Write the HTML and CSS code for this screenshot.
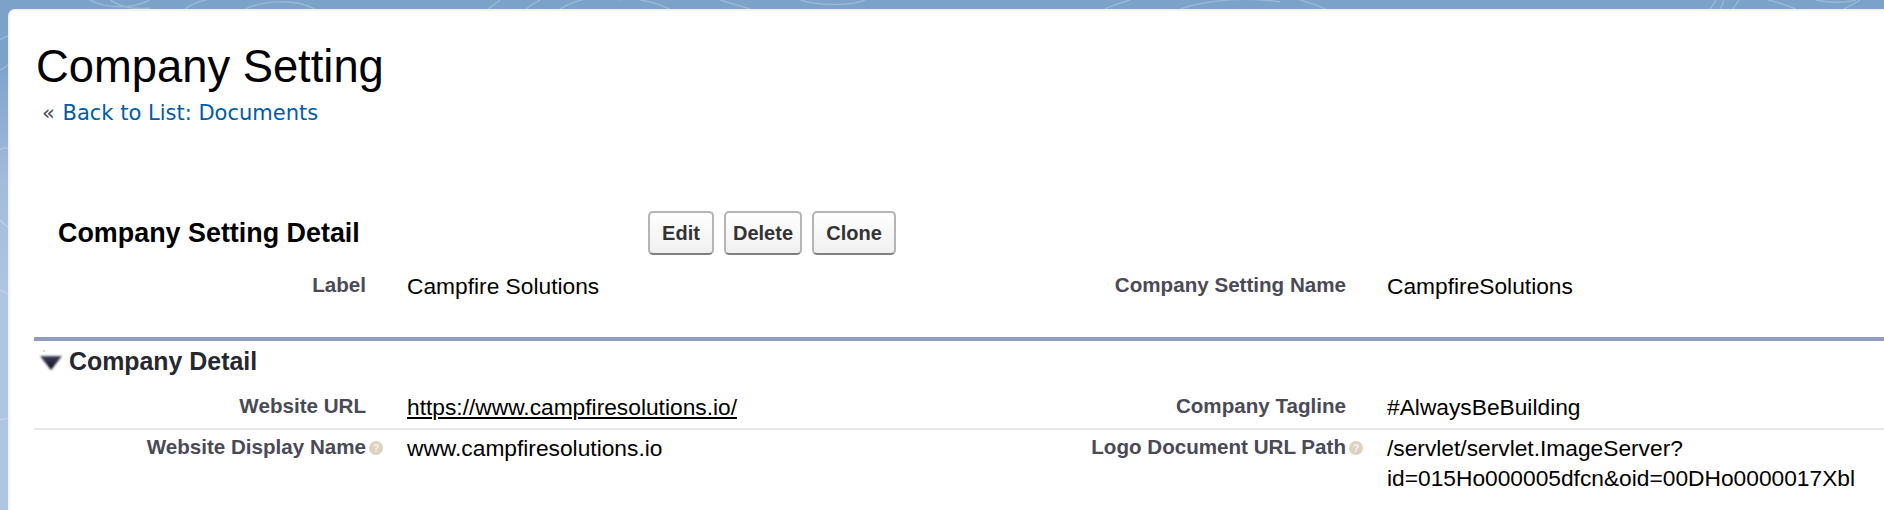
FILE: index.html
```html
<!DOCTYPE html>
<html lang="en">
<head>
    <meta charset="UTF-8">
    <title>Company Setting</title>
    <link rel="stylesheet" href="styles.css">
</head>
<body>
    <!-- swirl pattern behind the page -->
    <svg class="backdrop" width="1884" height="510" viewBox="0 0 1884 510" fill="none" stroke="#ffffff" stroke-opacity="0.22" stroke-width="1.5">
        <path d="M90 0c15 8 40 10 60 0M150 8c-20 2-30 -2-40 -8"/>
        <path d="M185 9c8-6 14-8 22-9M245 9c20-9 50-10 70 0"/>
        <path d="M500 0c-4 4-8 6-12 9M540 0c-6 3-10 6-14 9M560 9c20-12 40-14 60-9"/>
        <path d="M640 0c15 2 20 5 30 9M720 0c10 3 20 6 30 9M800 0c20 6 50 6 65 0"/>
        <path d="M1130 0c-10 3-20 6-25 9M1180 9c30-10 70-12 100-7M1300 0c10 3 20 6 25 9"/>
        <path d="M1710 9c3-3 4-6 6-9M1720 9c2-3 3-6 4-9M1733 9c2-3 4-6 6-9"/>
        <path d="M1768 0c10 2 20 6 28 9M1816 0c12 3 30 3 40 0M1844 9c6-3 12-6 16-9"/>
        <path d="M0 40c4-3 7-4 10-4M0 70c5-2 8-4 10-8M10 150c-4-3-8-3-10 0M0 220c3 4 7 6 10 8M0 290c4 1 7 3 10 6M0 420c4-2 7-2 10 0"/>
    </svg>

    <div class="page">
        <h1 class="page-title">Company Setting</h1>
        <div class="back-row">
            <span class="back-arrows">&laquo;</span>
            <a class="back-link" href="#">Back to List: Documents</a>
        </div>

        <div class="detail-block">
            <div class="block-header">
                <h2 class="block-title">Company Setting Detail</h2>
                <div class="block-buttons">
                    <button class="btn btn-edit" type="button">Edit</button>
                    <button class="btn btn-delete" type="button">Delete</button>
                    <button class="btn btn-clone" type="button">Clone</button>
                </div>
            </div>

            <div class="field-row field-row-first">
                <div class="field-label">Label</div>
                <div class="field-value">Campfire Solutions</div>
                <div class="field-label">Company Setting Name</div>
                <div class="field-value">CampfireSolutions</div>
            </div>

            <div class="section-header">
                <svg class="twisty" width="26" height="24" viewBox="0 0 26 24">
                    <defs>
                        <linearGradient id="twistyFill" x1="0" y1="0" x2="0" y2="1">
                            <stop offset="0" stop-color="#3c4058"/>
                            <stop offset="1" stop-color="#0c0c1c"/>
                        </linearGradient>
                        <filter id="twistyBlur"><feGaussianBlur stdDeviation="0.9"/></filter>
                    </defs>
                    <circle cx="5" cy="2" r="1" fill="#c9cbd6"/>
                    <polygon points="1,7 23,7 12,21" fill="url(#twistyFill)" filter="url(#twistyBlur)"/>
                </svg>
                <h3 class="section-title">Company Detail</h3>
            </div>

            <div class="field-row field-row-line">
                <div class="field-label">Website URL</div>
                <div class="field-value"><a class="value-link" href="#">https://www.campfiresolutions.io/</a></div>
                <div class="field-label">Company Tagline</div>
                <div class="field-value">#AlwaysBeBuilding</div>
            </div>
            <div class="field-row field-row-last">
                <div class="field-label">Website Display Name<span class="help-icon">?</span></div>
                <div class="field-value">www.campfiresolutions.io</div>
                <div class="field-label">Logo Document URL Path<span class="help-icon">?</span></div>
                <div class="field-value">/servlet/servlet.ImageServer?<br>id=015Ho000005dfcn&amp;oid=00DHo0000017Xbl</div>
            </div>
        </div>
    </div>
</body>
</html>
```

FILE: styles.css
```css
html, body {
    margin: 0;
    height: 510px;
    overflow: hidden;
}

body {
    position: relative;
    font-family: "Liberation Sans", Arial, sans-serif;
    background: linear-gradient(to bottom, #7ca2c9 0, #7ca2c9 60px, #a3bbdc 180px, #afc5e2 300px, #afc5e2 100%);
}

.backdrop {
    position: absolute;
    top: 0;
    left: 0;
}

.page {
    position: relative;
    margin: 9px 0 0 8px;
    height: 501px;
    box-sizing: border-box;
    padding: 0 0 0 24px;
    background: #fff;
    border-top: 2px solid #f2f3f4;
    border-left: 2px solid #f2f3f4;
    border-top-left-radius: 7px;
}

.page-title {
    margin: 0;
    padding: 30px 0 0 2px;
    font-size: 45.35px;
    line-height: 52px;
    font-weight: 400;
    color: #000;
}

.back-row {
    margin: 7px 0 0 8px;
    font-family: "DejaVu Sans", Verdana, sans-serif;
    font-size: 21px;
    line-height: 26px;
    color: #4a4a56;
}

.back-arrows {
    margin-right: 1px;
}

.back-link {
    color: #015ba7;
    text-decoration: none;
}

.detail-block {
    margin-top: 85px;
}

.block-header {
    display: flex;
    align-items: center;
    height: 44px;
}

.block-title {
    width: 590px;
    margin: 0 24px 0 0;
    padding-left: 24px;
    box-sizing: border-box;
    font-size: 26.9px;
    font-weight: 700;
    color: #000;
    flex: none;
}

.block-buttons {
    display: flex;
    gap: 10px;
}

.btn {
    height: 44px;
    padding: 0;
    font-family: "Liberation Sans", Arial, sans-serif;
    font-size: 20px;
    font-weight: 700;
    color: #333;
    background: linear-gradient(to bottom, #ffffff, #f0f0f0);
    border: 2px solid #b5b5b5;
    border-bottom-color: #7f7f7f;
    border-radius: 5px;
}

.btn-edit {
    width: 66px;
}

.btn-delete {
    width: 78px;
}

.btn-clone {
    width: 84px;
}

.field-row {
    display: grid;
    grid-template-columns: 332px 648px 332px 1fr;
    font-size: 20.6px;
    line-height: 30px;
}

.field-row-first {
    height: 82px;
    padding-top: 16px;
    box-sizing: border-box;
}

.field-row-line {
    border-bottom: 2px solid #e8e8e8;
    height: 44px;
    box-sizing: border-box;
    padding-top: 6px;
}

.field-row-last {
    padding-top: 3px;
}

.field-label {
    position: relative;
    text-align: right;
    font-weight: 700;
    line-height: 28px;
    color: #4a4a56;
}

.field-value {
    padding-left: 41px;
    font-size: 22.75px;
    color: #000;
}

.value-link {
    color: #000;
    text-decoration: underline;
}

.help-icon {
    position: absolute;
    left: 100%;
    top: 8px;
    margin-left: 3px;
    width: 14px;
    height: 14px;
    border-radius: 50%;
    background: #ddd2c0;
    color: #f7f3ea;
    font-size: 11px;
    line-height: 14px;
    text-align: center;
}

.section-header {
    display: flex;
    align-items: center;
    height: 49px;
    padding-bottom: 5px;
    box-sizing: border-box;
    border-top: 4px solid #8e9dbf;
}

.twisty {
    margin-left: 5px;
    flex: none;
}

.section-title {
    margin: 0 0 0 4px;
    font-size: 24.9px;
    font-weight: 700;
    color: #27282f;
}
```
